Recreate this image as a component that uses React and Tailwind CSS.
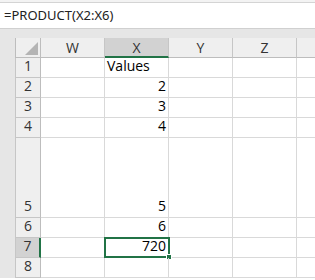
import React from 'react'

const cols = ['W', 'X', 'Y', 'Z', '']
const rows = [
  { n: '1', h: 'h-[20px]', x: 'Values', left: true },
  { n: '2', h: 'h-[20px]', x: '2' },
  { n: '3', h: 'h-[20px]', x: '3' },
  { n: '4', h: 'h-[20px]', x: '4' },
  { n: '5', h: 'h-[80px]', x: '5' },
  { n: '6', h: 'h-[20px]', x: '6' },
  { n: '7', h: 'h-[20px]', x: '720', sel: true },
  { n: '8', h: 'h-[20px]', x: '' },
]

function Row({ r }) {
  return (
    <div className={`flex ${r.h}`}>
      <div className="w-[15px] shrink-0 bg-[#e6e6e6]" />
      <div
        className={`w-[26px] shrink-0 flex items-end justify-center pb-[1px] border-b border-l border-[#c6c6c6] text-[14px] text-[#333] ${
          r.sel ? 'bg-[#d2d2d2] border-r-2 border-r-[#217346]' : 'bg-[#efefef] border-r border-r-[#bdbdbd]'
        }`}
      >
        {r.n}
      </div>
      <div className="w-[64px] shrink-0 border-r border-b border-[#d9d9d9]" />
      <div
        className={`relative w-[64px] shrink-0 border-r border-b border-[#d9d9d9] flex items-end px-[2px] pb-[1px] text-[14px] text-black ${
          r.left ? 'justify-start' : 'justify-end'
        }`}
      >
        {r.x}
        {r.sel && (
          <div className="absolute -left-[1px] -top-[1px] w-[66px] h-[21px] border-2 border-[#217346]">
            <div className="absolute -right-[4px] -bottom-[4px] w-[6px] h-[6px] bg-[#217346] border border-white" />
          </div>
        )}
      </div>
      <div className="w-[64px] shrink-0 border-r border-b border-[#d9d9d9]" />
      <div className="w-[64px] shrink-0 border-r border-b border-[#d9d9d9]" />
      <div className="w-[64px] shrink-0 border-b border-[#d9d9d9]" />
    </div>
  )
}

export default function App() {
  return (
    <div className="w-[315px] h-[280px] overflow-hidden bg-white font-['Open_Sans',sans-serif]">
      <div className="h-[3px] bg-[#f3f3f3] border-b border-[#d4d4d4]" />
      <div className="h-[26px] flex items-center pl-[4px] text-[13px] text-[#222] border-b border-[#d0d0d0] font-['Noto_Sans',sans-serif]">
        =PRODUCT(X2:X6)
      </div>
      <div className="h-[9px] bg-[#e6e6e6]" />
      <div className="flex h-[20px] bg-[#e6e6e6]">
        <div className="w-[15px] shrink-0 bg-[#e6e6e6]" />
        <div className="w-[26px] shrink-0 bg-[#efefef] border-l border-r border-b border-[#bdbdbd] flex items-end justify-end pr-[2px] pb-[2px]">
          <svg width="13" height="13" viewBox="0 0 13 13">
            <polygon points="13,0 13,13 0,13" fill="#b4b4b4" />
          </svg>
        </div>
        {cols.map((c, i) => (
          <div
            key={i}
            className={`w-[64px] shrink-0 flex items-center justify-center text-[14px] text-[#333] border-r border-[#c6c6c6] ${
              c === 'X' ? 'bg-[#d2d2d2] border-b-2 border-b-[#217346]' : 'bg-[#efefef] border-b border-b-[#bdbdbd]'
            }`}
          >
            {c}
          </div>
        ))}
      </div>
      {rows.map((r) => (
        <Row key={r.n} r={r} />
      ))}
    </div>
  )
}
